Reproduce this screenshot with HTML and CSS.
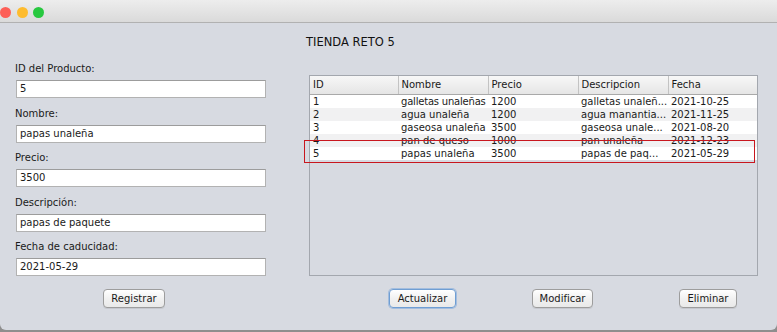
FILE: index.html
```html
<!DOCTYPE html>
<html lang="es">
<head>
<meta charset="utf-8">
<title>Tienda Reto 5</title>
<link rel="stylesheet" href="styles.css">
</head>
<body>
<div class="window">
  <div class="titlebar">
    <span class="light red"></span>
    <span class="light yellow"></span>
    <span class="light green"></span>
  </div>
  <div class="content">
    <div class="left">
      <div class="form">
        <div class="field">
          <label class="label">ID del Producto:</label>
          <div class="input">5</div>
        </div>
        <div class="field">
          <label class="label">Nombre:</label>
          <div class="input">papas unaleña</div>
        </div>
        <div class="field">
          <label class="label">Precio:</label>
          <div class="input">3500</div>
        </div>
        <div class="field">
          <label class="label">Descripción:</label>
          <div class="input">papas de paquete</div>
        </div>
        <div class="field">
          <label class="label">Fecha de caducidad:</label>
          <div class="input">2021-05-29</div>
        </div>
      </div>
      <button class="btn btn-registrar">Registrar</button>
    </div>
    <div class="right">
      <div class="title">TIENDA RETO 5</div>
      <div class="table-wrap">
        <table class="grid">
          <colgroup>
            <col class="c1"><col class="c2"><col class="c3"><col class="c4"><col class="c5">
          </colgroup>
          <thead>
            <tr><th>ID</th><th>Nombre</th><th>Precio</th><th>Descripcion</th><th>Fecha</th></tr>
          </thead>
          <tbody>
            <tr><td>1</td><td class="tight">galletas unaleñas</td><td>1200</td><td>galletas unaleñ...</td><td>2021-10-25</td></tr>
            <tr class="alt"><td>2</td><td>agua unaleña</td><td>1200</td><td>agua manantia...</td><td>2021-11-25</td></tr>
            <tr><td>3</td><td>gaseosa unaleña</td><td>3500</td><td>gaseosa unale...</td><td>2021-08-20</td></tr>
            <tr class="alt"><td>4</td><td>pan de queso</td><td>1000</td><td>pan unaleña</td><td>2021-12-23</td></tr>
            <tr><td>5</td><td>papas unaleña</td><td>3500</td><td>papas de paq...</td><td>2021-05-29</td></tr>
          </tbody>
        </table>
        <div class="highlight"></div>
      </div>
      <div class="actions">
        <button class="btn btn-focus btn-actualizar">Actualizar</button>
        <button class="btn btn-modificar">Modificar</button>
        <button class="btn btn-eliminar">Eliminar</button>
      </div>
    </div>
  </div>
</div>
</body>
</html>
```

FILE: styles.css
```css
* { box-sizing: border-box; }
html, body { margin: 0; padding: 0; }
body {
  background: #8e8e8e;
  font-family: "DejaVu Sans", "Liberation Sans", sans-serif;
  font-size: 10px;
  color: #1a1a1a;
  width: 777px;
  height: 332px;
  overflow: hidden;
}
.window {
  width: 777px;
  height: 330px;
  background: #d7dae1;
  border-radius: 0 0 6px 6px;
  overflow: hidden;
}
.titlebar {
  height: 23px;
  display: flex;
  align-items: center;
  gap: 5.5px;
  padding-top: 2px;
  background: linear-gradient(#ededed, #dadada);
  border-bottom: 1px solid #b1b1b1;
}
.light { width: 11px; height: 11px; border-radius: 50%; display: block; }
.red { background: #fd5f57; }
.yellow { background: #febc2e; }
.green { background: #27c83f; }

.content { display: flex; height: 307px; }
.left {
  width: 290px;
  padding: 38px 0 0 16px;
}
.form { display: flex; flex-direction: column; gap: 7.5px; }
.field { display: flex; flex-direction: column; }
.label {
  line-height: 16px;
  height: 16px;
  margin-left: -1px;
}
.input {
  margin-top: 3px;
  width: 250px;
  height: 18px;
  background: #fff;
  border: 1px solid #b2b2b2;
  border-top-color: #9c9c9c;
  padding: 0 3px;
  line-height: 16px;
}
.btn {
  font-family: "DejaVu Sans", "Liberation Sans", sans-serif;
  font-size: 10px;
  color: #1a1a1a;
  height: 19px;
  padding: 0;
  border: 1px solid #9d9d9d;
  border-radius: 4px;
  background: linear-gradient(#ffffff, #f1f1f1 50%, #e9e9e9);
  box-shadow: 0 1px 0 rgba(0,0,0,0.08);
  line-height: 17px;
  display: block;
}
.btn-registrar { width: 62px; margin: 13px 0 0 87px; }
.btn-focus {
  border-color: #6f9ed3;
  box-shadow: 0 0 0 1px rgba(120,165,220,0.55);
}

.right { flex: 1; display: flex; flex-direction: column; }
.title {
  font-size: 11.5px;
  line-height: 16px;
  margin: 11px 0 0 16px;
  color: #111;
}
.table-wrap {
  position: relative;
  margin: 25px 0 0 19px;
  width: 449px;
  height: 201px;
  border: 1px solid #a3a7ae;
  background: #d7dae1;
}
.grid {
  width: 447px;
  border-collapse: collapse;
  table-layout: fixed;
}
.c1 { width: 88px; }
.c2 { width: 90px; }
.c3 { width: 90px; }
.c4 { width: 90px; }
.c5 { width: 89px; }
.grid th {
  height: 18px;
  text-align: left;
  font-weight: normal;
  padding: 0 3px;
  background: linear-gradient(#f7f7f7, #e5e5e5);
  border-bottom: 1px solid #a9a9a9;
  border-right: 1px solid #c3c3c3;
  line-height: 17px;
  white-space: nowrap;
}
.grid th:last-child { border-right: none; }
.grid td {
  height: 13px;
  line-height: 13px;
  padding: 0 3px;
  background: #fff;
  white-space: nowrap;
  overflow: hidden;
}
.grid td.tight { letter-spacing: -0.2px; }
.grid tr.alt td { background: #f1f1f2; }
.highlight {
  position: absolute;
  left: -6px;
  top: 64px;
  width: 451px;
  height: 23px;
  border: 1.5px solid #c8161e;
}
.actions { display: flex; margin-top: 13px; }
.btn-actualizar { width: 67px; margin-left: 99px; }
.btn-modificar { width: 61px; margin-left: 76px; }
.btn-eliminar { width: 58px; margin-left: 86px; }
```
